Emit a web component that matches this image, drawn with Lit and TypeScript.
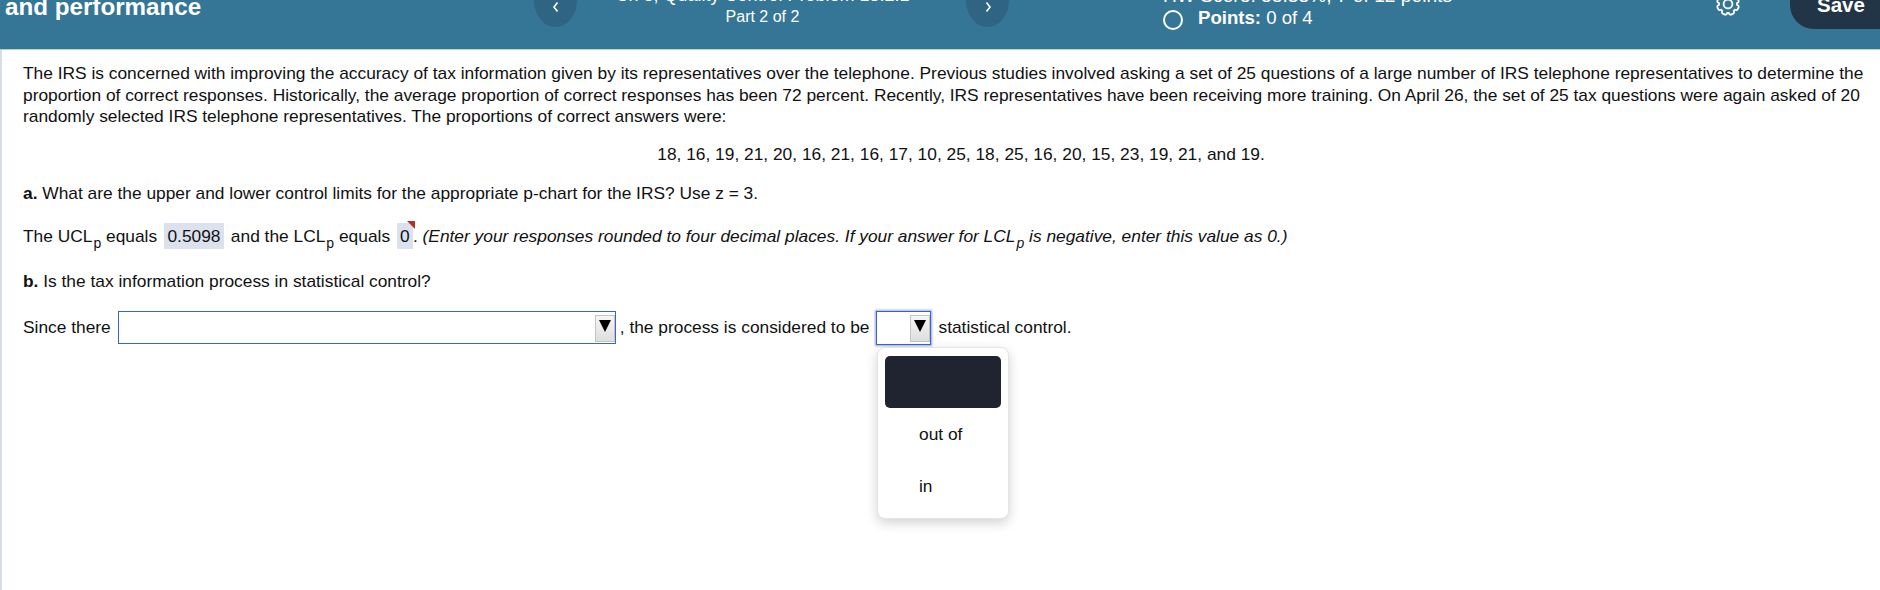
import { LitElement, html, css } from "lit";
import { customElement } from "lit/decorators.js";

function gearPath(cx: number, cy: number, outer: number, inner: number, teeth: number) {
  const pts: string[] = [];
  const step = (Math.PI * 2) / teeth;
  for (let i = 0; i < teeth; i++) {
    const a = i * step - Math.PI / 2 + step / 2;
    const p = (r: number, t: number) => `${(cx + r * Math.cos(t)).toFixed(2)} ${(cy + r * Math.sin(t)).toFixed(2)}`;
    const s = a - step * 0.38;
    const e = a + step * 0.38;
    pts.push(`${i === 0 ? "M" : "L"}${p(inner, s)} Q${p(outer * 1.06, s + step * 0.06)} ${p(outer, a)} Q${p(outer * 1.06, e - step * 0.06)} ${p(inner, e)}`);
  }
  return pts.join(" ") + " Z";
}

@customElement("app-root")
export class AppRoot extends LitElement {
  static styles = css`
    :host { display: block; width: 1880px; height: 590px; overflow: hidden; background: #fff; font-family: "Liberation Sans", Arial, sans-serif; font-size: 17.35px; color: #111; position: relative; }
    .header { height: 49px; background: #357697; border-bottom: 1px solid #b5cfdc; color: #fff; display: grid; grid-template-columns: 534px 43px 389px 43px 1fr; position: relative; overflow: hidden; }
    .title { font-size: 24.2px; font-weight: 700; padding-left: 5px; line-height: 28px; margin-top: -7px; white-space: nowrap; }
    .nav { height: 53px; margin-top: -26px; border-radius: 50%; background: #2f6582; display: flex; align-items: center; justify-content: center; }
    .nav svg { display: block; margin-top: 13px; }
    .mid { text-align: center; font-size: 16px; line-height: 22px; margin-top: -16px; padding-right: 18px; white-space: nowrap; }
    .mid .top { font-size: 18px; }
    .right { display: flex; align-items: flex-start; padding-left: 154px; }
    .score { width: 553px; font-size: 18.6px; line-height: 24px; margin-top: -16px; white-space: nowrap; }
    .score .hw { font-size: 19.2px; height: 22px; }
    .points { display: flex; align-items: center; gap: 15px; }
    .ring { width: 20px; height: 20px; border: 2.2px solid #fff; border-radius: 50%; box-sizing: border-box; margin-top: 4px; }
    .gear { margin-top: -8px; display: block; }
    .save { position: absolute; right: 0; top: -24px; width: 90px; height: 53px; background: #223547; border-radius: 0 0 0 24px; font-size: 20.5px; font-weight: 700; display: flex; align-items: flex-end; padding-left: 27px; box-sizing: border-box; padding-bottom: 12px; }
    .body { padding: 13px 16px 0 21px; border-left: 2px solid #d8dde3; height: 540px; box-sizing: border-box; line-height: 21.6px; }
    p { margin: 0; }
    .center { text-align: center; margin-top: 16px; padding-left: 35px; }
    .mt1 { margin-top: 18px; }
    .mt2 { margin-top: 18px; }
    .mt3 { margin-top: 22px; }
    .mt4 { margin-top: 18px; }
    .row { display: flex; align-items: center; white-space: pre; }
    .ans { background: #dbe2ee; padding: 2px 3.5px; margin: 0 2px; position: relative; display: inline-block; line-height: 22px; }
    .ans.flag { margin-right: 0; padding: 2px 3.2px; }
    .ans.flag::after { content: ""; position: absolute; right: -2px; top: -2px; width: 0; height: 0; border-top: 8px solid #b0302a; border-left: 8px solid transparent; }
    sub { font-size: 14px; line-height: 0; vertical-align: -6px; margin-left: 1px; }
    .sel { border: 1px solid #3d64c4; height: 33px; box-sizing: border-box; display: flex; justify-content: flex-end; align-items: flex-start; }
    .sel.a { width: 498px; margin: 0 4px 0 7px; }
    .sel.b { width: 55px; height: 34px; margin: 0 7px 0 7px; box-shadow: 0 0 2px 1px rgba(61,100,196,.55); }
    .btn { width: 20px; height: 27px; margin-top: 3px; background: linear-gradient(#f6f6f6, #dedede); border: 1px solid #c4c4c4; box-sizing: border-box; display: flex; justify-content: center; padding-top: 4px; }
    .tri { width: 0; height: 0; border-left: 6px solid transparent; border-right: 6px solid transparent; border-top: 12px solid #000; }
    .menu { position: absolute; left: 877px; top: 347px; width: 132px; height: 172px; background: #fff; border: 1px solid #e4e4e4; border-radius: 8px; box-shadow: 0 4px 12px rgba(0,0,0,.18); box-sizing: border-box; padding: 8px 7px; }
    .item { height: 52px; display: flex; align-items: center; padding-left: 34px; }
    .item.active { background: #1f2430; border-radius: 5px; }
  `;

  render() {
    return html`
      <div class="header">
        <div class="title">and performance</div>
        <div class="nav"><svg width="10" height="14" viewBox="0 0 10 14"><path d="M6.5 2.5 L3 7 L6.5 11.5" fill="none" stroke="#fff" stroke-width="1.6"/></svg></div>
        <div class="mid"><div class="top">Ch 5, Quality Control Problem 13.2.1</div><div>Part 2 of 2</div></div>
        <div class="nav"><svg width="10" height="14" viewBox="0 0 10 14"><path d="M3.5 2.5 L7 7 L3.5 11.5" fill="none" stroke="#fff" stroke-width="1.6"/></svg></div>
        <div class="right">
          <div class="score"><div class="hw">HW Score: 58.33%, 7 of 12 points</div><div class="points"><span class="ring"></span><span><b>Points:</b> 0 of 4</span></div></div>
          <svg class="gear" width="24" height="24" viewBox="0 0 24 24"><path d=${gearPath(12, 12, 11, 9, 8)} fill="none" stroke="#fff" stroke-width="1.8" stroke-linejoin="round"/><circle cx="12" cy="12" r="4.4" fill="none" stroke="#fff" stroke-width="1.8"/></svg>
        </div>
        <div class="save">Save</div>
      </div>
      <div class="body">
        <p>The IRS is concerned with improving the accuracy of tax information given by its representatives over the telephone. Previous studies involved asking a set of 25 questions of a large number of IRS telephone representatives to determine the proportion of correct responses. Historically, the average proportion of correct responses has been 72 percent. Recently, IRS representatives have been receiving more training. On April 26, the set of 25 tax questions were again asked of 20 randomly selected IRS telephone representatives. The proportions of correct answers were:</p>
        <p class="center">18, 16, 19, 21, 20, 16, 21, 16, 17, 10, 25, 18, 25, 16, 20, 15, 23, 19, 21, and 19.</p>
        <p class="mt1"><b>a.</b> What are the upper and lower control limits for the appropriate p-chart for the IRS? Use z = 3.</p>
        <p class="mt2">The UCL<sub>p</sub> equals <span class="ans">0.5098</span> and the LCL<sub>p</sub> equals <span class="ans flag">0</span>. <i>(Enter your responses rounded to four decimal places. If your answer for LCL<sub>p</sub> is negative, enter this value as 0.)</i></p>
        <p class="mt3"><b>b.</b> Is the tax information process in statistical control?</p>
        <div class="row mt4"><span>Since there</span><span class="sel a"><span class="btn"><span class="tri"></span></span></span><span>, the process is considered to be</span><span class="sel b"><span class="btn"><span class="tri"></span></span></span><span>statistical control.</span></div>
      </div>
      <div class="menu"><div class="item active"></div><div class="item">out of</div><div class="item">in</div></div>
    `;
  }
}
